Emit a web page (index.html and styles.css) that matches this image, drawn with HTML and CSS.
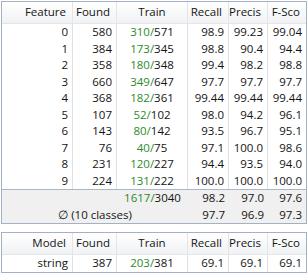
FILE: index.html
```html
<!DOCTYPE html>
<html>
<head>
<meta charset="utf-8">
<link rel="stylesheet" href="styles.css">
</head>
<body>
<div class="table">
  <div class="row head">
    <div class="c">Feature</div><div class="c">Found</div><div class="c ctr">Train</div><div class="c">Recall</div><div class="c">Precis</div><div class="c last">F-Sco</div>
  </div>
  <div class="row"><div class="c">0</div><div class="c">580</div><div class="c ctr"><span class="g">310/</span>571</div><div class="c">98.9</div><div class="c">99.23</div><div class="c last">99.04</div></div>
  <div class="row"><div class="c">1</div><div class="c">384</div><div class="c ctr"><span class="g">173/</span>345</div><div class="c">98.8</div><div class="c">90.4</div><div class="c last">94.4</div></div>
  <div class="row"><div class="c">2</div><div class="c">358</div><div class="c ctr"><span class="g">180/</span>348</div><div class="c">99.4</div><div class="c">98.2</div><div class="c last">98.8</div></div>
  <div class="row"><div class="c">3</div><div class="c">660</div><div class="c ctr"><span class="g">349/</span>647</div><div class="c">97.7</div><div class="c">97.7</div><div class="c last">97.7</div></div>
  <div class="row"><div class="c">4</div><div class="c">368</div><div class="c ctr"><span class="g">182/</span>361</div><div class="c">99.44</div><div class="c">99.44</div><div class="c last">99.44</div></div>
  <div class="row"><div class="c">5</div><div class="c">107</div><div class="c ctr"><span class="g">52/</span>102</div><div class="c">98.0</div><div class="c">94.2</div><div class="c last">96.1</div></div>
  <div class="row"><div class="c">6</div><div class="c">143</div><div class="c ctr"><span class="g">80/</span>142</div><div class="c">93.5</div><div class="c">96.7</div><div class="c last">95.1</div></div>
  <div class="row"><div class="c">7</div><div class="c">76</div><div class="c ctr"><span class="g">40/</span>75</div><div class="c">97.1</div><div class="c">100.0</div><div class="c last">98.6</div></div>
  <div class="row"><div class="c">8</div><div class="c">231</div><div class="c ctr"><span class="g">120/</span>227</div><div class="c">94.4</div><div class="c">93.5</div><div class="c last">94.0</div></div>
  <div class="row"><div class="c">9</div><div class="c">224</div><div class="c ctr"><span class="g">131/</span>222</div><div class="c">100.0</div><div class="c">100.0</div><div class="c last">100.0</div></div>
  <div class="summary">
    <div class="row srow"><div class="c span2"></div><div class="c ctr"><span class="g">1617/</span>3040</div><div class="c">98.2</div><div class="c">97.0</div><div class="c last">97.6</div></div>
    <div class="row srow"><div class="c span3 ctr">∅ (10 classes)</div><div class="c">97.7</div><div class="c">96.9</div><div class="c last">97.3</div></div>
  </div>
</div>

<div class="table second">
  <div class="row head">
    <div class="c">Model</div><div class="c">Found</div><div class="c ctr">Train</div><div class="c">Recall</div><div class="c">Precis</div><div class="c last">F-Sco</div>
  </div>
  <div class="row"><div class="c">string</div><div class="c">387</div><div class="c ctr"><span class="g">203/</span>381</div><div class="c">69.1</div><div class="c">69.1</div><div class="c last">69.1</div></div>
</div>
</body>
</html>
```

FILE: styles.css
```css
html, body {
  margin: 0;
  padding: 0;
  background: #ffffff;
}
body {
  padding: 1px 0 0 1px;
  font-family: "Open Sans", "Noto Sans", sans-serif;
  font-size: 11.5px;
  color: #141414;
}
.table {
  width: 306px;
  box-sizing: border-box;
  border: 1px solid #a3b1c2;
}
.second {
  margin-top: 8px;
}
.row {
  display: grid;
  grid-template-columns: 71px 44px 71px 41px 39px 38px;
  height: 16.5px;
  line-height: 16.5px;
}
.c {
  box-sizing: border-box;
  border-right: 1px solid #e1e1e1;
  text-align: right;
  padding-right: 4px;
  white-space: nowrap;
  overflow: hidden;
}
.c.last {
  border-right: none;
}
.ctr {
  text-align: center;
  padding-right: 0;
}
.g {
  color: #2b8a2b;
}
.head {
  height: 21px;
  line-height: 20px;
  background: linear-gradient(#ffffff, #f1f2f4);
  border-bottom: 1px solid #e3e5e8;
}
.head .c {
  border-right-color: #e3e5e8;
  padding-right: 6px;
}
.head .ctr {
  padding-right: 0;
}
.summary {
  background: #f0f0f0;
  border-top: 1px solid #a9b6c6;
}
.srow {
  height: 16.5px;
  line-height: 16.5px;
}
.srow .c {
  border-right: none;
}
.span2 {
  grid-column: span 2;
}
.span3 {
  grid-column: span 3;
}
```
